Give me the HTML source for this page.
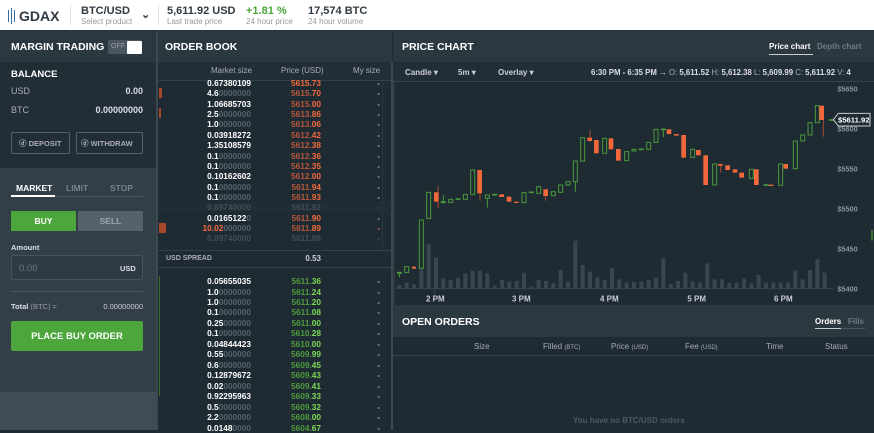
<!DOCTYPE html>
<html><head><meta charset="utf-8"><style>
*{margin:0;padding:0;box-sizing:border-box}
body{width:874px;height:430px;overflow:hidden;background:#1f2b33;font-family:"Liberation Sans",sans-serif;position:relative;color:#fff}
.a{position:absolute;white-space:nowrap}
.b{font-weight:bold}
.ob{position:absolute;left:158px;width:234px;height:10.4px;font-size:8.3px;font-weight:bold;line-height:10.4px}
.ob .s{position:absolute;right:141px}
.ob .p{position:absolute;right:71px}
.ob .m{position:absolute;right:12px;color:#aab}
.z{color:#55626b}
.r1{color:#b9553a}.r2{color:#f26a3e}
.g1{color:#4f9a3c}.g2{color:#7ed957}
.dim{opacity:.35}
</style></head><body>
<!-- top bar -->
<div class="a" style="left:0;top:0;width:874px;height:32px;background:#fff;border-bottom:2px solid #2a363e"></div>
<div class="a" style="left:8px;top:10px;width:1px;height:12px;background:#3a6fb0"></div>
<div class="a" style="left:11px;top:8px;width:1px;height:16px;background:#3a6fb0"></div>
<div class="a" style="left:14px;top:10px;width:1px;height:12px;background:#3a6fb0"></div>
<div class="a b" style="left:19px;top:8px;font-size:14px;color:#2f3a44">GDAX</div>
<div class="a" style="left:70px;top:5px;width:1px;height:20px;background:#ddd"></div>
<div class="a b" style="left:81px;top:5px;font-size:11px;color:#2f3a44">BTC/USD</div>
<div class="a" style="left:81px;top:17px;font-size:8px;color:#999">Select product</div>
<div class="a" style="left:141px;top:8px;font-size:11px;color:#2f3a44;font-weight:bold">&#8964;</div>
<div class="a" style="left:158px;top:5px;width:1px;height:20px;background:#ddd"></div>
<div class="a b" style="left:167px;top:5px;font-size:11px;color:#2f3a44">5,611.92 USD</div>
<div class="a" style="left:167px;top:17px;font-size:8px;color:#999">Last trade price</div>
<div class="a b" style="left:246px;top:5px;font-size:11px;color:#4ca63c">+1.81 %</div>
<div class="a" style="left:246px;top:17px;font-size:8px;color:#999">24 hour price</div>
<div class="a b" style="left:308px;top:5px;font-size:11px;color:#2f3a44">17,574 BTC</div>
<div class="a" style="left:308px;top:17px;font-size:8px;color:#999">24 hour volume</div>

<!-- left panel -->
<div class="a" style="left:0;top:32px;width:157px;height:30px;background:#2b3840"></div>
<div class="a b" style="left:11px;top:41px;font-size:10.5px;color:#fff">MARGIN TRADING</div>
<div class="a" style="left:108px;top:40px;width:34px;height:14px;background:#4a565f;border-radius:2px"></div>
<div class="a" style="left:111px;top:43px;font-size:7px;color:#99a">OFF</div>
<div class="a" style="left:127px;top:41px;width:15px;height:13px;background:#fff;border-radius:1px"></div>
<div class="a" style="left:0;top:62px;width:157px;height:106px;background:#222e36"></div>
<div class="a b" style="left:11px;top:69px;font-size:9.5px">BALANCE</div>
<div class="a" style="left:11px;top:86px;font-size:9px;color:#aab">USD</div>
<div class="a b" style="left:100px;top:86px;width:43px;text-align:right;font-size:9px;color:#dde">0.00</div>
<div class="a" style="left:11px;top:105px;font-size:9px;color:#aab">BTC</div>
<div class="a b" style="left:80px;top:105px;width:63px;text-align:right;font-size:9px;color:#dde">0.00000000</div>
<div class="a" style="left:11px;top:132px;width:59px;height:22px;border:1px solid #566069;border-radius:2px"></div>
<div class="a b" style="left:19px;top:138px;font-size:7.5px;color:#aab">&#9427; DEPOSIT</div>
<div class="a" style="left:76px;top:132px;width:67px;height:22px;border:1px solid #566069;border-radius:2px"></div>
<div class="a b" style="left:81px;top:138px;font-size:7.5px;color:#aab">&#9427; WITHDRAW</div>
<div class="a" style="left:0;top:168px;width:157px;height:224px;background:#333f47"></div>
<div class="a b" style="left:16px;top:183px;font-size:8.5px;color:#fff">MARKET</div>
<div class="a b" style="left:66px;top:183px;font-size:8.5px;color:#77838b">LIMIT</div>
<div class="a b" style="left:110px;top:183px;font-size:8.5px;color:#77838b">STOP</div>
<div class="a" style="left:11px;top:196px;width:132px;height:1px;background:#4c5861"></div>
<div class="a" style="left:11px;top:195px;width:44px;height:2px;background:#fff"></div>
<div class="a" style="left:11px;top:211px;width:65px;height:20px;background:#4ca63c"></div>
<div class="a b" style="left:11px;top:216px;width:65px;text-align:center;font-size:8.5px">BUY</div>
<div class="a" style="left:78px;top:211px;width:65px;height:20px;background:#56626b"></div>
<div class="a b" style="left:78px;top:216px;width:65px;text-align:center;font-size:8.5px;color:#9aa5ad">SELL</div>
<div class="a b" style="left:11px;top:243px;font-size:7.5px;color:#dde">Amount</div>
<div class="a" style="left:11px;top:255px;width:132px;height:25px;border:1px solid #47535c;background:#2f3a42;border-radius:2px"></div>
<div class="a" style="left:19px;top:263px;font-size:9.5px;color:#6b777f">0.00</div>
<div class="a b" style="left:120px;top:264px;font-size:7.5px;color:#dde">USD</div>
<div class="a" style="left:11px;top:291px;width:132px;height:1px;background:#4c5861"></div>
<div class="a" style="left:11px;top:302px;font-size:7.5px;color:#dde"><b>Total</b> <span style="color:#99a">(BTC) ≈</span></div>
<div class="a" style="left:90px;top:302px;width:53px;text-align:right;font-size:7.5px;color:#ccd">0.00000000</div>
<div class="a" style="left:11px;top:321px;width:132px;height:30px;background:#4ca63c;border-radius:2px"></div>
<div class="a b" style="left:11px;top:331px;width:132px;text-align:center;font-size:9.5px">PLACE BUY ORDER</div>
<div class="a" style="left:0;top:392px;width:157px;height:38px;background:#404c55"></div>
<div class="a" style="left:156px;top:32px;width:2px;height:398px;background:#3d4951"></div>

<!-- order book -->
<div class="a" style="left:158px;top:32px;width:234px;height:30px;background:#2b3840"></div>
<div class="a b" style="left:165px;top:41px;font-size:10.5px">ORDER BOOK</div>
<div class="a" style="left:158px;top:62px;width:234px;height:19px;background:#222e36;border-bottom:1px solid #33414a"></div>
<div class="a" style="left:211px;top:66px;font-size:8px;color:#aab">Market size</div>
<div class="a" style="left:281px;top:66px;font-size:8px;color:#aab">Price (USD)</div>
<div class="a" style="left:353px;top:66px;font-size:8px;color:#aab">My size</div>
<div class="a" style="left:391px;top:62px;width:2px;height:368px;background:#3d4951"></div>
<div class="a" style="left:382px;top:82px;width:1px;height:168px;background:#2c3840"></div>
<!-- depth bars -->
<div class="a" style="left:159px;top:88px;width:3px;height:10px;background:#a8472c"></div>
<div class="a" style="left:159px;top:108px;width:2px;height:10px;background:#a8472c"></div>
<div class="a" style="left:159px;top:223px;width:7px;height:10px;background:#a8472c"></div>
<div class="a" style="left:159px;top:276px;width:1px;height:120px;background:#3c6d33"></div>

<div class="ob" style="top:78px"><span class="s">0.67380109</span><span class="p r2">5615.73</span><span class="m">-</span></div>
<div class="ob" style="top:88px"><span class="s">4.6<span class="z">0000000</span></span><span class="p"><span class="r1">5615.</span><span class="r2">70</span></span><span class="m">-</span></div>
<div class="ob" style="top:98.5px"><span class="s">1.06685703</span><span class="p"><span class="r1">5615.</span><span class="r2">00</span></span><span class="m">-</span></div>
<div class="ob" style="top:109px"><span class="s">2.5<span class="z">0000000</span></span><span class="p"><span class="r1">5613.</span><span class="r2">86</span></span><span class="m">-</span></div>
<div class="ob" style="top:119px"><span class="s">1.0<span class="z">0000000</span></span><span class="p"><span class="r1">5613.</span><span class="r2">06</span></span><span class="m">-</span></div>
<div class="ob" style="top:129.5px"><span class="s">0.03918272</span><span class="p"><span class="r1">5612.</span><span class="r2">42</span></span><span class="m">-</span></div>
<div class="ob" style="top:140px"><span class="s">1.35108579</span><span class="p"><span class="r1">5612.</span><span class="r2">38</span></span><span class="m">-</span></div>
<div class="ob" style="top:150.5px"><span class="s">0.1<span class="z">0000000</span></span><span class="p"><span class="r1">5612.</span><span class="r2">36</span></span><span class="m">-</span></div>
<div class="ob" style="top:161px"><span class="s">0.1<span class="z">0000000</span></span><span class="p"><span class="r1">5612.</span><span class="r2">35</span></span><span class="m">-</span></div>
<div class="ob" style="top:171px"><span class="s">0.10162602</span><span class="p"><span class="r1">5612.</span><span class="r2">00</span></span><span class="m">-</span></div>
<div class="ob" style="top:181.5px"><span class="s">0.1<span class="z">0000000</span></span><span class="p"><span class="r1">5611.</span><span class="r2">94</span></span><span class="m">-</span></div>
<div class="ob" style="top:192px"><span class="s">0.1<span class="z">0000000</span></span><span class="p"><span class="r1">5611.</span><span class="r2">93</span></span><span class="m">-</span></div>
<div class="ob dim" style="top:202px;background:#26323a"><span class="s" style="color:#889">0.89740000</span><span class="p" style="color:#889">5611.92</span><span class="m">-</span></div>
<div class="ob" style="top:212.5px"><span class="s">0.0165122<span class="z">0</span></span><span class="p"><span class="r1">5611.</span><span class="r2">90</span></span><span class="m">-</span></div>
<div class="ob" style="top:223px"><span class="s"><span class="r2">10.02</span><span class="z">000000</span></span><span class="p"><span class="r1">5611.</span><span class="r2">89</span></span><span class="m" style="color:#f26a3e">-</span></div>
<div class="ob dim" style="top:233px"><span class="s" style="color:#889">0.89740000</span><span class="p" style="color:#889">5611.86</span><span class="m">-</span></div>
<div class="a" style="left:158px;top:250px;width:233px;height:18px;background:#1f2b33;border-top:1px solid #33414a;border-bottom:1px solid #33414a"></div>
<div class="a b" style="left:166px;top:255px;font-size:7px;color:#aab">USD SPREAD</div>
<div class="a b" style="left:300px;top:254px;width:21px;text-align:right;font-size:8px;color:#ccd">0.53</div>

<div class="ob" style="top:276px"><span class="s">0.05655035</span><span class="p"><span class="g1">5611.</span><span class="g2">36</span></span><span class="m">-</span></div>
<div class="ob" style="top:286.5px"><span class="s">1.0<span class="z">0000000</span></span><span class="p"><span class="g1">5611.</span><span class="g2">24</span></span><span class="m">-</span></div>
<div class="ob" style="top:297px"><span class="s">1.0<span class="z">0000000</span></span><span class="p"><span class="g1">5611.</span><span class="g2">20</span></span><span class="m">-</span></div>
<div class="ob" style="top:307px"><span class="s">0.1<span class="z">0000000</span></span><span class="p"><span class="g1">5611.</span><span class="g2">08</span></span><span class="m">-</span></div>
<div class="ob" style="top:317.5px"><span class="s">0.25<span class="z">000000</span></span><span class="p"><span class="g1">5611.</span><span class="g2">00</span></span><span class="m">-</span></div>
<div class="ob" style="top:328px"><span class="s">0.1<span class="z">0000000</span></span><span class="p"><span class="g1">5610.</span><span class="g2">28</span></span><span class="m">-</span></div>
<div class="ob" style="top:338.5px"><span class="s">0.04844423</span><span class="p"><span class="g1">5610.</span><span class="g2">00</span></span><span class="m">-</span></div>
<div class="ob" style="top:349px"><span class="s">0.55<span class="z">000000</span></span><span class="p"><span class="g1">5609.</span><span class="g2">99</span></span><span class="m">-</span></div>
<div class="ob" style="top:359.5px"><span class="s">0.6<span class="z">0000000</span></span><span class="p"><span class="g1">5609.</span><span class="g2">45</span></span><span class="m">-</span></div>
<div class="ob" style="top:370px"><span class="s">0.12879672</span><span class="p"><span class="g1">5609.</span><span class="g2">43</span></span><span class="m">-</span></div>
<div class="ob" style="top:380.5px"><span class="s">0.02<span class="z">000000</span></span><span class="p"><span class="g1">5609.</span><span class="g2">41</span></span><span class="m">-</span></div>
<div class="ob" style="top:391px"><span class="s">0.92295963</span><span class="p"><span class="g1">5609.</span><span class="g2">33</span></span><span class="m">-</span></div>
<div class="ob" style="top:401.5px"><span class="s">0.5<span class="z">0000000</span></span><span class="p"><span class="g1">5609.</span><span class="g2">32</span></span><span class="m">-</span></div>
<div class="ob" style="top:412px"><span class="s">2.2<span class="z">0000000</span></span><span class="p"><span class="g1">5608.</span><span class="g2">00</span></span><span class="m">-</span></div>
<div class="ob" style="top:422.5px"><span class="s">0.0148<span class="z">0000</span></span><span class="p"><span class="g1">5604.</span><span class="g2">67</span></span><span class="m">-</span></div>

<!-- price chart -->
<div class="a" style="left:393px;top:32px;width:481px;height:30px;background:#2b3840"></div>
<div class="a b" style="left:402px;top:41px;font-size:10.5px">PRICE CHART</div>
<div class="a b" style="left:769px;top:42px;font-size:8px;color:#fff">Price chart</div>
<div class="a" style="left:769px;top:54px;width:44px;height:1px;background:#ccc"></div>
<div class="a b" style="left:817px;top:42px;font-size:8px;color:#6f7b83">Depth chart</div>
<div class="a" style="left:393px;top:62px;width:481px;height:20px;background:#222e36;border-bottom:1px solid #33414a"></div>
<div class="a b" style="left:405px;top:68px;font-size:8px;color:#ccd">Candle ▾</div>
<div class="a b" style="left:458px;top:68px;font-size:8px;color:#ccd">5m ▾</div>
<div class="a b" style="left:498px;top:68px;font-size:8px;color:#ccd">Overlay ▾</div>
<div class="a b" style="left:591px;top:68px;font-size:7.8px;color:#dde">6:30 PM - 6:35 PM → <span style="font-weight:normal;color:#aab">O:</span> 5,611.52 <span style="font-weight:normal;color:#aab">H:</span> 5,612.38 <span style="font-weight:normal;color:#aab">L:</span> 5,609.99 <span style="font-weight:normal;color:#aab">C:</span> 5,611.92 <span style="font-weight:normal;color:#aab">V:</span> 4</div>

<svg class="a" style="left:390px;top:80px" width="484" height="230" viewBox="0 0 1452 690">
<g fill="#3a464f">
<rect x="22" y="615" width="12" height="10"/><rect x="44" y="608" width="12" height="17"/><rect x="66" y="613" width="12" height="12"/><rect x="88" y="568" width="12" height="57"/><rect x="110" y="493" width="12" height="132"/><rect x="132" y="533" width="12" height="92"/><rect x="154" y="595" width="12" height="30"/><rect x="176" y="600" width="12" height="25"/><rect x="198" y="593" width="12" height="32"/><rect x="220" y="580" width="12" height="45"/><rect x="242" y="572" width="12" height="53"/><rect x="264" y="572" width="12" height="53"/><rect x="286" y="580" width="12" height="45"/><rect x="308" y="617" width="12" height="8"/><rect x="330" y="600" width="12" height="25"/><rect x="352" y="605" width="12" height="20"/><rect x="374" y="603" width="12" height="22"/><rect x="396" y="578" width="12" height="47"/><rect x="418" y="620" width="12" height="5"/><rect x="440" y="600" width="12" height="25"/><rect x="462" y="603" width="12" height="22"/><rect x="484" y="610" width="12" height="15"/><rect x="506" y="570" width="12" height="55"/><rect x="528" y="605" width="12" height="20"/><rect x="550" y="482" width="12" height="143"/><rect x="572" y="555" width="12" height="70"/><rect x="594" y="575" width="12" height="50"/><rect x="616" y="593" width="12" height="32"/><rect x="638" y="600" width="12" height="25"/><rect x="660" y="565" width="12" height="60"/><rect x="682" y="598" width="12" height="27"/><rect x="704" y="608" width="12" height="17"/><rect x="726" y="605" width="12" height="20"/><rect x="748" y="605" width="12" height="20"/><rect x="770" y="600" width="12" height="25"/><rect x="792" y="593" width="12" height="32"/><rect x="814" y="535" width="12" height="90"/><rect x="836" y="612" width="12" height="13"/><rect x="858" y="603" width="12" height="22"/><rect x="880" y="578" width="12" height="47"/><rect x="902" y="605" width="12" height="20"/><rect x="924" y="608" width="12" height="17"/><rect x="946" y="550" width="12" height="75"/><rect x="968" y="598" width="12" height="27"/><rect x="990" y="598" width="12" height="27"/><rect x="1012" y="608" width="12" height="17"/><rect x="1034" y="608" width="12" height="17"/><rect x="1056" y="595" width="12" height="30"/><rect x="1078" y="610" width="12" height="15"/><rect x="1100" y="585" width="12" height="40"/><rect x="1122" y="608" width="12" height="17"/><rect x="1144" y="608" width="12" height="17"/><rect x="1166" y="608" width="12" height="17"/><rect x="1188" y="608" width="12" height="17"/><rect x="1210" y="572" width="12" height="53"/><rect x="1232" y="598" width="12" height="27"/><rect x="1254" y="570" width="12" height="55"/><rect x="1276" y="538" width="12" height="87"/><rect x="1298" y="578" width="12" height="47"/>
</g>
<line x1="18" y1="626" x2="1330" y2="626" stroke="#3a464f" stroke-width="3"/>
<g stroke="#4a9a3c" stroke-width="3" fill="none">
<rect x="22" y="577" width="12" height="3"/><rect x="44" y="560" width="12" height="18"/><rect x="88" y="420" width="12" height="145"/><rect x="110" y="337" width="12" height="78"/><rect x="154" y="365" width="12" height="3"/><rect x="176" y="358" width="12" height="9"/><rect x="198" y="356" width="12" height="2"/><rect x="220" y="343" width="12" height="15"/><rect x="242" y="270" width="12" height="73"/><rect x="286" y="345" width="12" height="10"/><rect x="308" y="343" width="12" height="2"/><rect x="396" y="338" width="12" height="30"/><rect x="418" y="336" width="12" height="2"/><rect x="440" y="320" width="12" height="20"/><rect x="484" y="335" width="12" height="12"/><rect x="506" y="315" width="12" height="22"/><rect x="528" y="305" width="12" height="10"/><rect x="550" y="243" width="12" height="62"/><rect x="572" y="173" width="12" height="70"/><rect x="638" y="175" width="12" height="45"/><rect x="704" y="215" width="12" height="27"/><rect x="726" y="208" width="12" height="5"/><rect x="748" y="207" width="12" height="2"/><rect x="770" y="187" width="12" height="21"/><rect x="792" y="148" width="12" height="39"/><rect x="814" y="147" width="12" height="2"/><rect x="902" y="208" width="12" height="24"/><rect x="968" y="252" width="12" height="63"/><rect x="1078" y="268" width="12" height="27"/><rect x="1122" y="314" width="12" height="2"/><rect x="1166" y="252" width="12" height="64"/><rect x="1210" y="183" width="12" height="83"/><rect x="1232" y="165" width="12" height="18"/><rect x="1254" y="128" width="12" height="37"/><rect x="1276" y="77" width="12" height="51"/><rect x="1318" y="119" width="12" height="2"/>
<line x1="28" y1="580" x2="28" y2="592"/><line x1="160" y1="345" x2="160" y2="365"/><line x1="292" y1="355" x2="292" y2="383"/><line x1="556" y1="305" x2="556" y2="335"/><line x1="820" y1="149" x2="820" y2="172"/>
</g>
<g fill="#f2683a" stroke="#a84a30" stroke-width="3">
<line x1="144" y1="318" x2="144" y2="385"/><line x1="270" y1="340" x2="270" y2="362"/><line x1="466" y1="348" x2="466" y2="362"/><line x1="600" y1="150" x2="600" y2="185"/><line x1="992" y1="256" x2="992" y2="278"/><line x1="1300" y1="120" x2="1300" y2="170"/>
</g>
<g fill="#f2683a">
<rect x="66" y="560" width="12" height="6"/><rect x="132" y="337" width="14" height="28"/><rect x="262" y="270" width="14" height="70"/><rect x="328" y="343" width="14" height="8"/><rect x="350" y="350" width="14" height="15"/><rect x="372" y="365" width="14" height="4"/><rect x="460" y="328" width="14" height="20"/><rect x="592" y="173" width="14" height="10"/><rect x="612" y="180" width="14" height="40"/><rect x="656" y="175" width="14" height="33"/><rect x="678" y="207" width="14" height="35"/><rect x="830" y="148" width="14" height="14"/><rect x="852" y="162" width="14" height="5"/><rect x="874" y="165" width="14" height="68"/><rect x="918" y="210" width="14" height="16"/><rect x="940" y="226" width="14" height="89"/><rect x="984" y="252" width="14" height="5"/><rect x="1006" y="256" width="14" height="14"/><rect x="1028" y="268" width="14" height="10"/><rect x="1048" y="278" width="14" height="15"/><rect x="1092" y="268" width="14" height="47"/><rect x="1136" y="314" width="14" height="4"/><rect x="1180" y="252" width="14" height="14"/><rect x="1288" y="77" width="14" height="43"/>
</g>
<line x1="12" y1="0" x2="12" y2="690" stroke="#3d4951" stroke-width="3"/>
<g font-family="Liberation Sans" font-weight="bold" font-size="22" fill="#8a969e">
<text x="1342" y="35">$5650</text><text x="1342" y="155">$5600</text><text x="1342" y="275">$5550</text><text x="1342" y="395">$5500</text><text x="1342" y="515">$5450</text><text x="1342" y="635">$5400</text>
</g>
<path d="M1330 119 L1345 100 H1440 V138 H1345 Z" fill="#1f2b33" stroke="#ccc" stroke-width="3"/>
<text x="1344" y="127" font-family="Liberation Sans" font-weight="bold" font-size="23" fill="#fff">$5611.92</text>
<g font-family="Liberation Sans" font-weight="bold" font-size="24" fill="#ccd">
<text x="108" y="665">2 PM</text><text x="366" y="665">3 PM</text><text x="630" y="665">4 PM</text><text x="892" y="665">5 PM</text><text x="1152" y="665">6 PM</text>
</g>
<line x1="133" y1="626" x2="133" y2="640" stroke="#3a464f" stroke-width="3"/>
<line x1="1446" y1="450" x2="1446" y2="482" stroke="#4a9a3c" stroke-width="4"/>
</svg>
<div class="a" style="left:393px;top:305px;width:481px;height:2px;background:#2b3840"></div>

<!-- open orders -->
<div class="a" style="left:393px;top:307px;width:481px;height:30px;background:#2b3840"></div>
<div class="a b" style="left:402px;top:316px;font-size:10.5px">OPEN ORDERS</div>
<div class="a b" style="left:815px;top:317px;font-size:8px;color:#fff">Orders</div>
<div class="a b" style="left:848px;top:317px;font-size:8px;color:#6f7b83">Fills</div>
<div class="a" style="left:815px;top:328px;width:26px;height:1px;background:#ccc"></div>
<div class="a" style="left:841px;top:328px;width:24px;height:1px;background:#4c5861"></div>
<div class="a" style="left:393px;top:337px;width:481px;height:19px;border-bottom:1px solid #33414a"></div>
<div class="a" style="left:474px;top:342px;font-size:8px;color:#aab">Size</div>
<div class="a" style="left:543px;top:342px;font-size:8px;color:#aab">Filled <span style="font-size:6px">(BTC)</span></div>
<div class="a" style="left:611px;top:342px;font-size:8px;color:#aab">Price <span style="font-size:6px">(USD)</span></div>
<div class="a" style="left:685px;top:342px;font-size:8px;color:#aab">Fee <span style="font-size:6px">(USD)</span></div>
<div class="a" style="left:766px;top:342px;font-size:8px;color:#aab">Time</div>
<div class="a" style="left:825px;top:342px;font-size:8px;color:#aab">Status</div>
<div class="a b" style="left:573px;top:416px;font-size:8px;color:#4d5961">You have no BTC/USD orders</div>
</body></html>
